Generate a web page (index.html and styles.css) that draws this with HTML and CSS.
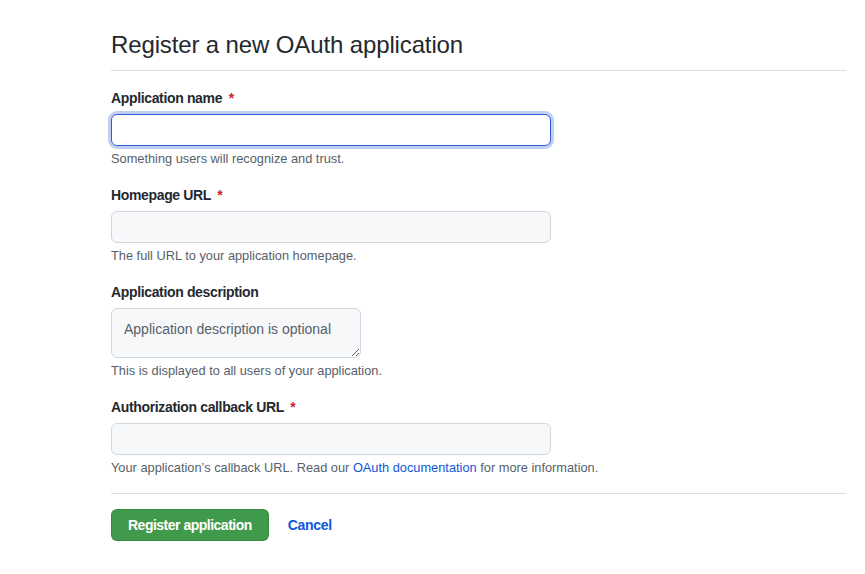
FILE: index.html
```html
<!DOCTYPE html>
<html lang="en">
<head>
    <meta charset="UTF-8">
    <meta name="viewport" content="width=device-width, initial-scale=1.0">
    <title>Register a new OAuth application</title>
    <link rel="stylesheet" href="styles.css">
</head>
<body>
    <div class="page">
        <h1 class="page-title">Register a new OAuth application</h1>

        <form class="oauth-form">
            <div class="form-group">
                <label for="app-name">Application name <span class="required">*</span></label>
                <input type="text" id="app-name" class="form-control focused">
                <p class="note">Something users will recognize and trust.</p>
            </div>
            <div class="form-group">
                <label for="homepage">Homepage URL <span class="required">*</span></label>
                <input type="text" id="homepage" class="form-control">
                <p class="note">The full URL to your application homepage.</p>
            </div>
            <div class="form-group">
                <label for="description">Application description</label>
                <textarea id="description" class="form-control description" placeholder="Application description is optional"></textarea>
                <p class="note">This is displayed to all users of your application.</p>
            </div>
            <div class="form-group">
                <label for="callback">Authorization callback URL <span class="required">*</span></label>
                <input type="text" id="callback" class="form-control">
                <p class="note">Your application’s callback URL. Read our <a href="#">OAuth documentation</a> for more information.</p>
            </div>

            <div class="form-actions">
                <button type="button" class="btn-primary">Register application</button>
                <a href="#" class="cancel">Cancel</a>
            </div>
        </form>
    </div>
</body>
</html>
```

FILE: styles.css
```css
body {
    margin: 0;
    font-family: "Liberation Sans", Arial, sans-serif;
    color: #24292f;
    background: #ffffff;
}
.page {
    width: 735px;
    margin-left: 111px;
    padding-top: 27px;
}
.page-title {
    margin: 0;
    font-size: 24px;
    font-weight: 400;
    line-height: 36px;
    letter-spacing: -0.13px;
    padding-bottom: 7px;
    border-bottom: 1px solid #d8dee4;
}
.oauth-form {
    padding-top: 17px;
}
.form-group {
    display: flex;
    flex-direction: column;
    align-items: flex-start;
    margin-bottom: 17px;
}
.form-group label {
    font-size: 14px;
    font-weight: 700;
    line-height: 21px;
    letter-spacing: -0.35px;
}
.required {
    color: #cf222e;
    margin-left: 3px;
}
.form-control {
    box-sizing: border-box;
    width: 440px;
    height: 32px;
    margin: 5px 0 0;
    padding: 5px 12px;
    font-family: inherit;
    font-size: 14px;
    color: #24292f;
    background: #f6f8fa;
    border: 1px solid #d0d7de;
    border-radius: 6px;
    outline: none;
}
.form-control.focused {
    background: #ffffff;
    border-color: #2f5fd6;
    box-shadow: 0 0 0 3px rgba(47, 95, 214, 0.3);
}
.description {
    width: 250px;
    height: 50px;
    padding: 10px 12px;
    line-height: 20px;
    resize: vertical;
}
.description::placeholder {
    color: #57606a;
}
.note {
    margin: 4px 0 0;
    font-size: 12.8px;
    line-height: 18px;
    color: #57606a;
}
.note a,
.cancel {
    color: #0f56d9;
    text-decoration: none;
}
.form-actions {
    display: flex;
    align-items: center;
    gap: 19px;
    margin-top: -1px;
    padding-top: 15px;
    border-top: 1px solid #d8dee4;
}
.btn-primary {
    height: 32px;
    padding: 0 16px;
    font-family: inherit;
    font-size: 14px;
    font-weight: 700;
    letter-spacing: -0.5px;
    color: #ffffff;
    background: #3f9a4b;
    border: 1px solid rgba(27, 31, 36, 0.15);
    border-radius: 6px;
}
.cancel {
    font-size: 14px;
    font-weight: 700;
    letter-spacing: -0.3px;
}
```
